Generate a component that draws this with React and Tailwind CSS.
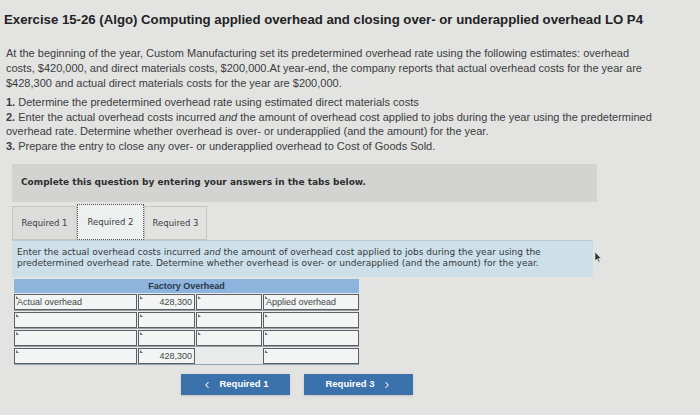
import { ChevronLeft, ChevronRight } from 'lucide-react'

const sans = { fontFamily: '"Liberation Sans", Arial, sans-serif' }
const verdana = { fontFamily: '"DejaVu Sans", Verdana, sans-serif' }

function Cell({ w, value, align = 'left', empty }) {
  if (empty) return <div className={`${w} h-[16px]`} />
  return (
    <div className={`${w} h-[16px] border border-[#5b5e62] bg-[#f3f4f4] relative`}>
      <span className="absolute left-[1px] top-[1px] w-0 h-0 border-l-[3px] border-t-[3px] border-l-[#6a6d70] border-t-transparent" />
      <div className={`px-[2px] text-[9px] leading-[14px] text-[#44474a] ${align === 'right' ? 'text-right' : ''}`} style={sans}>
        {value}
      </div>
    </div>
  )
}

export default function App() {
  const rows = [
    ['Actual overhead', '428,300', '', 'Applied overhead'],
    ['', '', '', ''],
    ['', '', '', ''],
    ['', '428,300', null, ''],
  ]
  return (
    <div className="w-[700px] h-[415px] bg-[#e3e4e2] text-[#2f3133] overflow-hidden relative" style={sans}>
      <h1 className="pl-[4px] pt-[11px] text-[13.2px] font-bold leading-[18px] text-[#222] whitespace-nowrap">
        Exercise 15-26 (Algo) Computing applied overhead and closing over- or underapplied overhead LO P4
      </h1>

      <p className="pl-[6px] mt-[17px] text-[11px] leading-[15px] text-[#3a3c3e] whitespace-nowrap">
        At the beginning of the year, Custom Manufacturing set its predetermined overhead rate using the following estimates: overhead<br />
        costs, $420,000, and direct materials costs, $200,000.At year-end, the company reports that actual overhead costs for the year are<br />
        $428,300 and actual direct materials costs for the year are $200,000.
      </p>

      <div className="pl-[6px] mt-[4px] text-[11px] leading-[14.5px] text-[#3a3c3e] whitespace-nowrap">
        <p><b>1.</b> Determine the predetermined overhead rate using estimated direct materials costs</p>
        <p><b>2.</b> Enter the actual overhead costs incurred <i>and</i> the amount of overhead cost applied to jobs during the year using the predetermined<br />
          overhead rate. Determine whether overhead is over- or underapplied (and the amount) for the year.</p>
        <p><b>3.</b> Prepare the entry to close any over- or underapplied overhead to Cost of Goods Sold.</p>
      </div>

      <div className="ml-[12px] mt-[11px] w-[585px] h-[38px] bg-[#d3d4d2] flex items-center pl-[9px]">
        <span className="text-[9px] font-bold text-[#2c2e30]" style={verdana}>
          Complete this question by entering your answers in the tabs below.
        </span>
      </div>

      <div className="ml-[12px] mt-[2px] flex items-end h-[36px]" style={verdana}>
        <div className="w-[65px] h-[34px] bg-[#dcdddb] border border-[#c4c5c3] flex items-center justify-center text-[8.5px] text-[#3a3c3e]">Required 1</div>
        <div className="w-[67px] h-[36px] bg-[#eef0ef] border border-dotted border-[#555] flex items-center justify-center text-[8.5px] text-[#3a3c3e]">Required 2</div>
        <div className="w-[63px] h-[34px] bg-[#e2e3e1] border border-[#c4c5c3] flex items-center justify-center text-[8.5px] text-[#3a3c3e]">Required 3</div>
      </div>

      <div className="ml-[12px] w-[581px] h-[37px] bg-[#cde0ea] border-t border-[#b9cbd6] pl-[5px] pt-[6px] text-[9px] leading-[11px] text-[#34383b] whitespace-nowrap" style={verdana}>
        Enter the actual overhead costs incurred <i>and</i> the amount of overhead cost applied to jobs during the year using the<br />
        predetermined overhead rate. Determine whether overhead is over- or underapplied (and the amount) for the year.
      </div>

      <div className="ml-[14px] mt-[2px] w-[345px] bg-[#e8ebea] border-b border-[#8fa5b8]">
        <div className="h-[14px] bg-[#8db4dc] text-center text-[9px] font-bold leading-[14px] text-[#2b3a4a]" style={sans}>
          Factory Overhead
        </div>
        {rows.map((r, i) => (
          <div key={i} className="flex gap-[1px] py-[0.5px] border-b border-[#9aa0a6] last:border-b-0">
            <Cell w="w-[123px]" value={r[0]} />
            <Cell w="w-[57px]" value={r[1]} align="right" />
            <Cell w="w-[66px]" value={r[2]} empty={r[2] === null} />
            <Cell w="w-[96px]" value={r[3]} />
          </div>
        ))}
      </div>

      <div className="mt-[9px] ml-[181px] flex gap-[14px]" style={sans}>
        <button className="w-[109px] h-[21px] bg-[#3c72ab] text-white text-[9.5px] font-bold flex items-center justify-center gap-[7px] shadow-sm">
          <ChevronLeft className="w-[10px] h-[10px]" strokeWidth={2.5} />
          Required 1
        </button>
        <button className="w-[109px] h-[21px] bg-[#3c72ab] text-white text-[9.5px] font-bold flex items-center justify-center gap-[7px] shadow-sm">
          Required 3
          <ChevronRight className="w-[10px] h-[10px]" strokeWidth={2.5} />
        </button>
      </div>

      <svg className="absolute left-[594px] top-[251px]" width="8" height="12" viewBox="0 0 8 12">
        <path d="M1 1 L1 10 L3.2 8 L4.8 11.5 L6 11 L4.5 7.6 L7.2 7.4 Z" fill="#333" stroke="#eee" strokeWidth="0.6" />
      </svg>
    </div>
  )
}
